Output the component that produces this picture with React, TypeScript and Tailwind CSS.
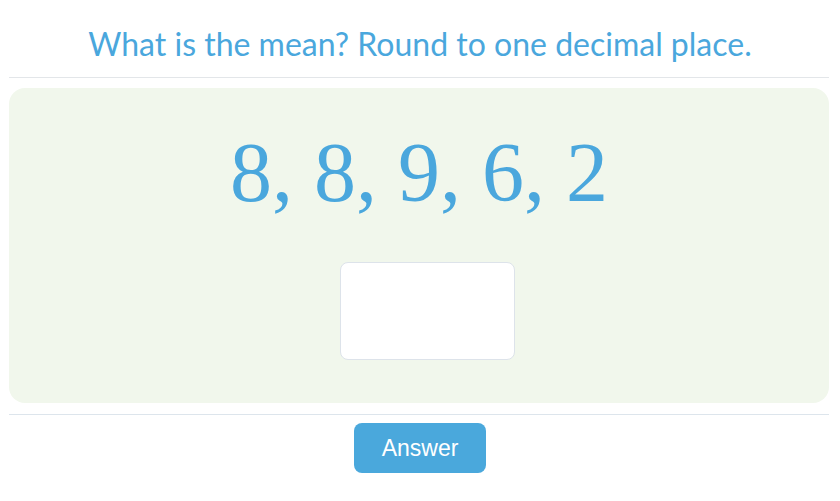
export default function App() {
  return (
    <div className="w-[840px] h-[501px] bg-white flex flex-col">
      {/* Question */}
      <div className="h-[77px] flex items-center justify-center pt-[10px]">
        <h1 className="text-[32px] text-[#4aa7dd] font-['Lato','Noto_Sans',sans-serif] tracking-[0px]">
          What is the mean? Round to one decimal place.
        </h1>
      </div>
      <div className="mx-[9px] w-[820px] border-t border-[#e3e6e9]" />

      {/* Card */}
      <div className="mx-[9px] w-[820px] mt-[10px] h-[315px] rounded-[16px] bg-[#f1f7ec] flex flex-col items-center">
        <div className="mt-[43px] text-[84px] leading-none text-[#4aa7dd] font-['Liberation_Serif',serif]">
          8, 8, 9, 6, 2
        </div>
        <input
          type="text"
          className="mt-[47px] ml-[17px] w-[175px] h-[98px] bg-white border border-[#dde3ea] rounded-[8px] outline-none"
        />
      </div>
      <div className="mx-[9px] w-[820px] mt-[11px] border-t border-[#dde5ec]" />

      {/* Action */}
      <div className="flex justify-center mt-[8px]">
        <button className="w-[132px] h-[50px] rounded-[8px] bg-[#4aa8dc] text-white text-[23px] font-['Liberation_Sans',sans-serif]">
          Answer
        </button>
      </div>
    </div>
  );
}
